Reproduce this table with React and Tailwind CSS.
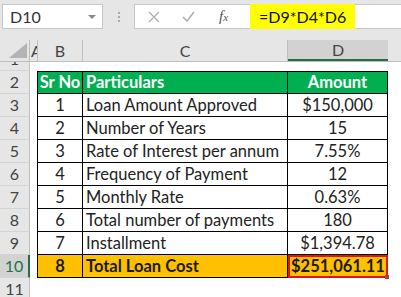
import React from "react";

const rows = [
  { n: 3, sr: "1", label: "Loan Amount Approved", amount: "$150,000" },
  { n: 4, sr: "2", label: "Number of Years", amount: "15" },
  { n: 5, sr: "3", label: "Rate of Interest per annum", amount: "7.55%" },
  { n: 6, sr: "4", label: "Frequency of Payment", amount: "12" },
  { n: 7, sr: "5", label: "Monthly Rate", amount: "0.63%" },
  { n: 8, sr: "6", label: "Total number of payments", amount: "180" },
  { n: 9, sr: "7", label: "Installment", amount: "$1,394.78" },
];

const RowHead = ({ n, selected }) => (
  <div
    className={
      "w-[30px] shrink-0 flex items-center justify-center border-b border-[#d4d4d4] text-[16px] " +
      (selected
        ? "bg-[#d2d2d2] text-[#217346] border-r-2 border-r-[#217346]"
        : "bg-[#e6e6e6] text-[#444] border-r border-r-[#bfbfbf]")
    }
  >
    {n}
  </div>
);

export default function App() {
  return (
    <div
      className="w-[401px] h-[297px] overflow-hidden bg-white text-[16.5px] text-[#222]"
      style={{ fontFamily: "Lato, 'Liberation Sans', sans-serif" }}
    >
      {/* formula bar */}
      <div className="h-[40px] bg-[#e6e6e6] flex items-start pt-[4px] pl-[2px] text-[16px]">
        <div className="w-[101px] h-[25px] bg-white border border-[#c6c6c6] flex items-center justify-between pl-[7px] pr-[6px]">
          <span className="text-[#333]">D10</span>
          <span className="w-0 h-0 border-l-[4px] border-r-[4px] border-t-[4px] border-l-transparent border-r-transparent border-t-[#888]" />
        </div>
        <div className="w-[31px] h-[25px] flex flex-col items-center justify-center gap-[2px]">
          <span className="w-[2px] h-[2px] bg-[#aaa]" />
          <span className="w-[2px] h-[2px] bg-[#aaa]" />
          <span className="w-[2px] h-[2px] bg-[#aaa]" />
        </div>
        <div className="flex-1 h-[25px] bg-white border border-[#c6c6c6] border-r-0 flex items-center">
          <div className="w-[115px] flex items-center pl-[13px]">
            <svg width="12" height="12" viewBox="0 0 12 12">
              <path d="M1 1L11 11M11 1L1 11" stroke="#b0b0b0" strokeWidth="1.3" />
            </svg>
            <svg className="ml-[22px]" width="13" height="11" viewBox="0 0 13 11">
              <path d="M1 6L5 10L12 1" stroke="#b0b0b0" strokeWidth="1.6" fill="none" />
            </svg>
            <span
              className="ml-[24px] italic text-[#555] text-[15px]"
              style={{ fontFamily: "'Liberation Serif', serif" }}
            >
              f<span className="text-[11px]">x</span>
            </span>
          </div>
          <div className="h-[25px] bg-[#ffff00] flex items-center px-[9px] text-[#111]">
            =D9*D4*D6
          </div>
        </div>
      </div>

      {/* column headers */}
      <div className="flex h-[22px] bg-[#e6e6e6] text-[#444] border-b border-[#bfbfbf] text-[16px]">
        <div className="w-[30px] shrink-0 relative border-r border-[#bfbfbf]">
          <svg className="absolute right-[2px] bottom-[3px]" width="18" height="15" viewBox="0 0 18 15">
            <path d="M18 0L18 15L0 15Z" fill="#b4b4b4" />
          </svg>
        </div>
        <div className="w-[8px] shrink-0 border-r border-[#bfbfbf] overflow-hidden flex items-center pl-[1px]">A</div>
        <div className="w-[45px] shrink-0 border-r border-[#bfbfbf] flex items-center justify-center">B</div>
        <div className="w-[205px] shrink-0 border-r border-[#bfbfbf] flex items-center justify-center">C</div>
        <div className="w-[100px] shrink-0 bg-[#d2d2d2] border-b-2 border-[#217346] flex items-center justify-center">D</div>
        <div className="flex-1" />
      </div>

      {/* row 1, mostly scrolled away */}
      <div className="flex h-[9px]">
        <div className="w-[30px] shrink-0 bg-[#e6e6e6] border-r border-[#bfbfbf] border-b border-b-[#d4d4d4] overflow-hidden">
          <div className="h-[23px] -mt-[15px] flex items-center justify-center text-[#444] text-[16px]">1</div>
        </div>
      </div>

      {/* row 2: table header */}
      <div className="flex h-[23px]">
        <RowHead n={2} />
        <div className="w-[7px] shrink-0" />
        <div className="w-[46px] shrink-0 bg-[#00b050] text-white font-bold border border-black flex items-center justify-center">
          Sr No
        </div>
        <div className="w-[205px] shrink-0 bg-[#00b050] text-white font-bold border-y border-r border-black flex items-center pl-[3px]">
          Particulars
        </div>
        <div className="w-[100px] shrink-0 bg-[#00b050] text-white font-bold border-y border-r border-black flex items-center justify-center">
          Amount
        </div>
      </div>

      {rows.map((r) => (
        <div key={r.n} className="flex h-[23px]">
          <RowHead n={r.n} />
          <div className="w-[7px] shrink-0" />
          <div className="w-[46px] shrink-0 border-x border-b border-black flex items-center justify-center">
            {r.sr}
          </div>
          <div className="w-[205px] shrink-0 border-r border-b border-black flex items-center pl-[3px]">
            {r.label}
          </div>
          <div className="w-[100px] shrink-0 border-r border-b border-black flex items-center justify-center">
            {r.amount}
          </div>
        </div>
      ))}

      {/* row 10: total */}
      <div className="flex h-[23px]">
        <RowHead n={10} selected />
        <div className="w-[7px] shrink-0" />
        <div className="w-[46px] shrink-0 bg-[#ffc000] font-bold text-[#1a1a1a] border-x border-b border-black flex items-center justify-center">
          8
        </div>
        <div className="w-[205px] shrink-0 bg-[#ffc000] font-bold text-[#1a1a1a] border-r border-b border-black flex items-center pl-[3px]">
          Total Loan Cost
        </div>
        <div className="w-[100px] shrink-0 relative bg-[#ffc000] font-bold text-[#1a1a1a] border-[2px] border-[#e0141c] flex items-center justify-center">
          $251,061.11
          <span className="absolute -right-[3px] -bottom-[3px] w-[4px] h-[4px] bg-[#c0392b]" />
        </div>
      </div>

      {/* row 11 */}
      <div className="flex h-[23px]">
        <RowHead n={11} />
      </div>
    </div>
  );
}
